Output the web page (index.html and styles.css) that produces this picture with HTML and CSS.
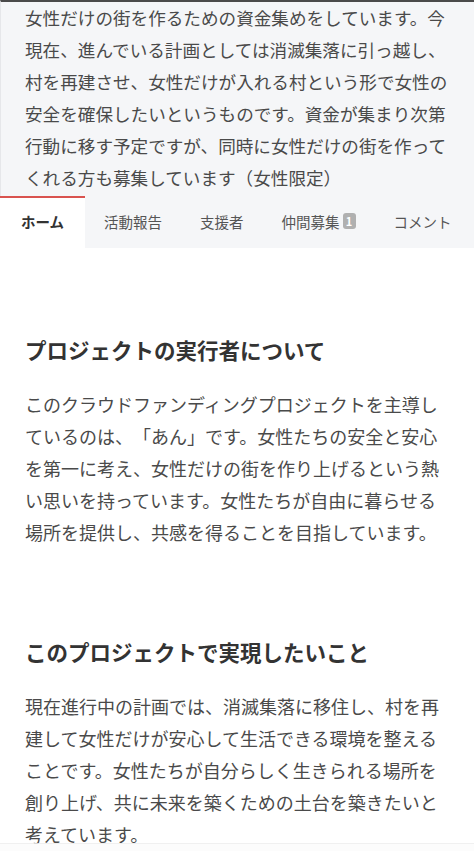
FILE: index.html
```html
<!DOCTYPE html>
<html lang="ja">
<head>
<meta charset="UTF-8">
<meta name="viewport" content="width=device-width, initial-scale=1.0">
<title>プロジェクト</title>
<link rel="stylesheet" href="styles.css">
</head>
<body>
<div class="project-head">
	<p class="project-lead">女性だけの街を作るための資金集めをしています。今現在、進んでいる計画としては消滅集落に引っ越し、村を再建させ、女性だけが入れる村という形で女性の安全を確保したいというものです。資金が集まり次第行動に移す予定ですが、同時に女性だけの街を作ってくれる方も募集しています（女性限定）</p>
</div>
<ul class="project-tabs">
	<li class="project-tab is-active">ホーム</li>
	<li class="project-tab">活動報告</li>
	<li class="project-tab">支援者</li>
	<li class="project-tab">仲間募集<span class="project-tab-badge">1</span></li>
	<li class="project-tab">コメント</li>
</ul>
<div class="project-story">
	<h2 class="story-title">プロジェクトの実行者について</h2>
	<p class="story-text">このクラウドファンディングプロジェクトを主導しているのは、「あん」です。女性たちの安全と安心を第一に考え、女性だけの街を作り上げるという熱い思いを持っています。女性たちが自由に暮らせる場所を提供し、共感を得ることを目指しています。</p>
	<h2 class="story-title">このプロジェクトで実現したいこと</h2>
	<p class="story-text">現在進行中の計画では、消滅集落に移住し、村を再建して女性だけが安心して生活できる環境を整えることです。女性たちが自分らしく生きられる場所を創り上げ、共に未来を築くための土台を築きたいと考えています。</p>
</div>
<div class="project-foot"></div>
</body>
</html>
```

FILE: styles.css
```css
*{margin: 0;padding: 0;box-sizing: border-box;}
body {
	font-family: "Noto Sans CJK JP", "Noto Sans", sans-serif;
	color: #444;
	background: #fff;
	text-spacing-trim: space-all;
}
.project-head {
	background: #f5f6f8;
	border-top: 2px solid #4b4b4b;
	border-left: 1px solid #e6e7ea;
	padding: 0 24px 2px 24px;
}
.project-lead {
	font-size: 17.6px;
	line-height: 32px;
	color: #4a4a4a;
}
.project-tabs {
	list-style: none;
	display: flex;
	background: #f5f6f8;
	white-space: nowrap;
	overflow: hidden;
}
.project-tab {
	display: flex;
	align-items: center;
	height: 52px;
	padding: 0 19px 4px;
	font-size: 14.5px;
	color: #555;
	border-top: 2px solid transparent;
}
.project-tab.is-active {
	background: #fff;
	color: #333;
	font-weight: bold;
	border-top-color: #d9534f;
	padding: 0 21px 4px;
}
.project-tab-badge {
	display: inline-block;
	width: 13px;
	height: 16px;
	margin-left: 3px;
	border-radius: 3px;
	background: #b0b0b0;
	color: #fff;
	font-size: 11px;
	line-height: 16px;
	text-align: center;
	font-weight: bold;
}
.project-story {
	padding: 86px 25px 40px;
}
.story-title {
	font-size: 21.5px;
	line-height: 32px;
	color: #333;
	font-weight: bold;
	margin-bottom: 22px;
}
.story-title + .story-text {
	margin-bottom: 88px;
}
.story-text {
	font-size: 18px;
	line-height: 32px;
	color: #4a4a4a;
}
.project-foot {
	position: fixed;
	left: 0;
	right: 0;
	bottom: 0;
	height: 8px;
	background: rgba(250, 250, 250, 0.5);
	border-top: 1px solid rgba(235, 235, 235, 0.7);
}
```
